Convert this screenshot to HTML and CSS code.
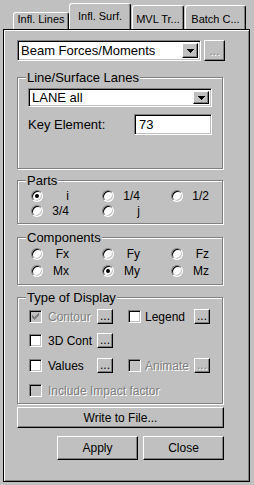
FILE: index.html
```html
<!DOCTYPE html>
<html>
<head>
<meta charset="utf-8">
<link rel="stylesheet" href="styles.css">
</head>
<body>
<div class="win">
  <div class="tabs">
    <div class="tab tab-lines">Infl. Lines</div>
    <div class="tab tab-sel">Infl. Surf.</div>
    <div class="tab tab-mvl">MVL Tr...</div>
    <div class="tab tab-batch">Batch C...</div>
  </div>
  <div class="panel">
    <div class="top-row">
      <div class="combo combo-main">
        <span class="combo-text">Beam Forces/Moments</span>
        <span class="drop-btn"><svg width="7" height="4" viewBox="0 0 7 4"><path d="M0 0h7v1H0zM1 1h5v1H1zM2 2h3v1H2zM3 3h1v1H3z"/></svg></span>
      </div>
      <div class="btn btn-more"><span class="dis">...</span></div>
    </div>

    <div class="group group-lanes">
      <div class="group-title">Line/Surface Lanes</div>
      <div class="combo combo-lane">
        <span class="combo-text">LANE all</span>
        <span class="drop-btn"><svg width="7" height="4" viewBox="0 0 7 4"><path d="M0 0h7v1H0zM1 1h5v1H1zM2 2h3v1H2zM3 3h1v1H3z"/></svg></span>
      </div>
      <div class="key-row">
        <span class="key-label">Key Element:</span>
        <div class="field">73</div>
      </div>
    </div>

    <div class="group group-parts">
      <div class="group-title">Parts</div>
      <div class="radio-grid parts-grid">
        <div class="radio-cell"><span class="radio checked"></span><span class="radio-label">i</span></div>
        <div class="radio-cell"><span class="radio"></span><span class="radio-label">1/4</span></div>
        <div class="radio-cell"><span class="radio"></span><span class="radio-label">1/2</span></div>
        <div class="radio-cell"><span class="radio"></span><span class="radio-label">3/4</span></div>
        <div class="radio-cell"><span class="radio"></span><span class="radio-label">j</span></div>
      </div>
    </div>

    <div class="group group-comp">
      <div class="group-title">Components</div>
      <div class="radio-grid comp-grid">
        <div class="radio-cell"><span class="radio"></span><span class="radio-label">Fx</span></div>
        <div class="radio-cell"><span class="radio"></span><span class="radio-label">Fy</span></div>
        <div class="radio-cell"><span class="radio"></span><span class="radio-label">Fz</span></div>
        <div class="radio-cell"><span class="radio"></span><span class="radio-label">Mx</span></div>
        <div class="radio-cell"><span class="radio checked"></span><span class="radio-label">My</span></div>
        <div class="radio-cell"><span class="radio"></span><span class="radio-label">Mz</span></div>
      </div>
    </div>

    <div class="group group-type">
      <div class="group-title">Type of Display</div>
      <div class="type-row row1">
        <span class="check disabled"><svg width="7" height="7" viewBox="0 0 7 7"><path d="M6 0h1v3H6zM5 1h1v3H5zM4 2h1v3H4zM3 3h1v3H3zM2 4h1v3H2zM1 3h1v3H1zM0 2h1v3H0z"/></svg></span>
        <span class="cb-label dis">Contour</span>
        <span class="btn mini">...</span>
        <span class="check"></span>
        <span class="cb-label">Legend</span>
        <span class="btn mini">...</span>
      </div>
      <div class="type-row row2">
        <span class="check"></span>
        <span class="cb-label">3D Cont</span>
        <span class="btn mini">...</span>
      </div>
      <div class="type-row row3">
        <span class="check"></span>
        <span class="cb-label">Values</span>
        <span class="btn mini">...</span>
        <span class="check disabled"></span>
        <span class="cb-label dis">Animate</span>
        <span class="btn mini"><span class="dis">...</span></span>
      </div>
      <div class="type-row row4">
        <span class="check disabled"></span>
        <span class="cb-label wide dis">Include Impact factor</span>
      </div>
    </div>

    <div class="btn btn-write">Write to File...</div>
    <div class="bottom-row">
      <div class="btn btn-act">Apply</div>
      <div class="btn btn-act">Close</div>
    </div>
  </div>
</div>
</body>
</html>
```

FILE: styles.css
```css
* { box-sizing: border-box; }

body {
  margin: 0;
  background: #c0c0c0;
  font-family: "Liberation Sans", Arial, sans-serif;
  font-size: 12px;
  color: #000;
}

.win {
  width: 254px;
  height: 485px;
}

/* ---------- tabs ---------- */
.tabs {
  display: flex;
  align-items: flex-end;
  height: 29px;
  padding-left: 13px;
}

.tab {
  font-size: 11px;
  line-height: 12px;
  border-top: 1px solid #fff;
  border-left: 1px solid #fff;
  border-right: 1px solid #000;
  box-shadow: inset -1px 0 0 #808080;
  border-radius: 3px 3px 0 0;
  text-align: center;
  white-space: nowrap;
}

.tab-lines { width: 56px; height: 17px; padding-top: 0; }
.tab-sel   { width: 62px; height: 26px; padding-top: 6px; }
.tab-mvl   { width: 52px; height: 24px; padding-top: 7px; margin-left: 1px; }
.tab-batch { width: 61px; height: 24px; padding-top: 7px; margin-left: 1px; }

/* ---------- panel ---------- */
.panel {
  margin-left: 3px;
  width: 247px;
  height: 453px;
  border: 1px solid #000;
  box-shadow: inset 1px 1px 0 #fff, inset -1px -1px 0 #808080;
  padding: 10px 0 0 13px;
  display: flex;
  flex-direction: column;
  align-items: flex-start;
}

/* ---------- generic controls ---------- */
.btn {
  display: flex;
  align-items: center;
  justify-content: center;
  background: #c0c0c0;
  border: 1px solid;
  border-color: #fff #000 #000 #fff;
  box-shadow: inset -1px -1px 0 #808080;
  font-size: 12px;
  line-height: 14px;
  white-space: nowrap;
}

.dis {
  color: #808080;
  text-shadow: 1px 1px 0 #fff;
}

.sunken {
  border: 1px solid;
}

.combo, .field {
  background: #fff;
  border: 1px solid;
  border-color: #808080 #fff #fff #808080;
  box-shadow: inset 1px 1px 0 #000, inset -1px -1px 0 #c0c0c0;
  display: flex;
  align-items: center;
  font-size: 13px;
  line-height: 15px;
}

.combo {
  padding: 2px 2px 2px 0;
}

.combo-text {
  flex: 1;
  padding-left: 3px;
}

.drop-btn {
  width: 16px;
  align-self: stretch;
  display: flex;
  align-items: center;
  justify-content: center;
  background: #c0c0c0;
  border: 1px solid;
  border-color: #fff #000 #000 #fff;
  box-shadow: inset -1px -1px 0 #808080;
}

.drop-btn svg { fill: #000; display: block; }

/* ---------- top row ---------- */
.top-row {
  display: flex;
  gap: 3px;
  height: 21px;
}

.combo-main { width: 184px; }
.btn-more { width: 21px; font-size: 12px; }

/* ---------- groups ---------- */
.group {
  width: 206px;
  border: 1px solid #808080;
  box-shadow: inset 1px 1px 0 #fff, 1px 1px 0 #fff;
  display: flex;
  flex-direction: column;
  align-items: flex-start;
}

.group-title {
  margin: -8px 0 0 8px;
  padding: 0 1px;
  background: #c0c0c0;
  font-size: 13px;
  line-height: 15px;
}

.group-lanes { margin-top: 16px; height: 92px; }
.group-parts { margin-top: 11px; height: 44px; }
.group-comp  { margin-top: 13px; height: 48px; }
.group-type  { margin-top: 12px; height: 107px; }

.combo-lane {
  margin: 3px 0 0 10px;
  width: 184px;
  height: 19px;
  padding: 2px 2px 2px 0;
}

.key-row {
  margin: 7px 0 0 10px;
  display: flex;
  align-items: center;
  font-size: 13px;
  line-height: 15px;
}

.key-label { width: 106px; }

.field {
  width: 78px;
  height: 21px;
  padding-left: 4px;
}

/* ---------- radios ---------- */
.radio-grid {
  display: grid;
  grid-template-columns: 71px 69px 40px;
  margin-left: 13px;
}

.parts-grid { grid-auto-rows: 15px; }
.comp-grid  { grid-auto-rows: 17px; }

.radio-cell {
  width: 38px;
  display: flex;
  align-items: center;
}

.radio {
  width: 12px;
  height: 12px;
  border-radius: 50%;
  border: 1px solid;
  border-color: #808080 #fff #fff #808080;
  box-shadow: inset 1px 1px 0 #000, inset -1px -1px 0 #c0c0c0;
  background: #fff;
  display: flex;
  align-items: center;
  justify-content: center;
  flex: none;
}

.radio.checked::after {
  content: "";
  width: 4px;
  height: 4px;
  border-radius: 50%;
  background: #000;
}

.radio-label {
  flex: 1;
  text-align: right;
  font-size: 12px;
  line-height: 14px;
}

/* ---------- type of display ---------- */
.type-row {
  display: grid;
  grid-template-columns: 19px 49px 31px 17px 49px 16px;
  align-items: center;
  margin-left: 11px;
  height: 15px;
}

.row1 { margin-top: 4px; }
.row2 { margin-top: 9px; }
.row3 { margin-top: 10px; }
.row4 { margin-top: 10px; }

.check {
  width: 13px;
  height: 13px;
  background: #fff;
  border: 1px solid;
  border-color: #808080 #fff #fff #808080;
  box-shadow: inset 1px 1px 0 #000, inset -1px -1px 0 #c0c0c0;
  display: flex;
  align-items: center;
  justify-content: center;
}

.check.disabled { background: #c0c0c0; }
.check svg { fill: #808080; display: block; }

.cb-label {
  font-size: 12px;
  line-height: 14px;
  white-space: nowrap;
}

.cb-label.wide { grid-column: 2 / 7; }

.btn.mini {
  width: 16px;
  height: 15px;
  font-size: 12px;
  line-height: 10px;
  align-items: flex-end;
  padding-bottom: 2px;
}

/* ---------- bottom buttons ---------- */
.btn-write {
  margin-top: 3px;
  width: 207px;
  height: 21px;
}

.bottom-row {
  margin-top: 8px;
  width: 207px;
  display: flex;
  justify-content: flex-end;
  gap: 5px;
}

.btn-act {
  width: 81px;
  height: 24px;
}
```
